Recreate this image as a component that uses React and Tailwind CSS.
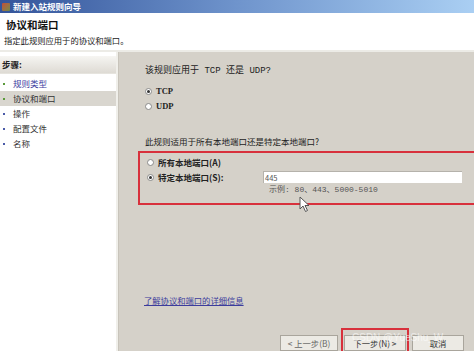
import React from "react";

const cjk = { fontFamily: '"Noto Sans CJK SC", "Liberation Sans", sans-serif' };
const mono = { fontFamily: '"Liberation Mono", "Noto Sans CJK SC", monospace' };
const serif = { fontFamily: '"Liberation Serif", "Noto Sans CJK SC", serif' };

function Radio({ checked }) {
  return (
    <span className="relative inline-flex w-[7px] h-[7px] rounded-full bg-white border border-[#8a8a8a] mr-[4px] items-center justify-center">
      {checked && <span className="w-[3px] h-[3px] rounded-full bg-[#333]" />}
    </span>
  );
}

function Step({ label, active, done }) {
  return (
    <div className={`flex items-center h-[15px] pl-[3px] ${active ? "bg-[#d9d6cf]" : ""}`}>
      <span className={`w-[2px] h-[2px] mr-[8px] ${done ? "bg-[#5a9a3a]" : "bg-[#4a5aa8]"}`} />
      <span className={`text-[8.5px] leading-none ${label === "规则类型" ? "text-[#3b3b9e]" : "text-[#333]"}`}>{label}</span>
    </div>
  );
}

export default function App() {
  return (
    <div className="w-[474px] h-[351px] overflow-hidden flex flex-col bg-[#d5d1c9] relative" style={cjk}>
      {/* title bar */}
      <div className="h-[13px] flex items-center bg-gradient-to-r from-[#34549a] via-[#6f94cc] to-[#aacff3]">
        <span className="w-[8px] h-[8px] ml-[2px] mr-[3px] bg-gradient-to-br from-[#c04a3a] to-[#6a8a4a] rounded-[1px]" />
        <span className="text-white font-bold text-[8.5px] leading-none">新建入站规则向导</span>
      </div>

      {/* header */}
      <div className="h-[39px] bg-white flex flex-col pl-[6px] border-b-2 border-[#ecebe6]">
        <div className="mt-[5px] text-[10.5px] font-bold text-[#111] leading-[14px]">协议和端口</div>
        <div className="mt-[3px] text-[8.3px] text-[#222] leading-[10px] ml-[-2px]">指定此规则应用于的协议和端口。</div>
      </div>

      {/* body */}
      <div className="flex flex-1">
        <div className="w-[116px] bg-white flex flex-col pt-[4px]">
          <div className="h-[18px] flex items-center pl-[2px] bg-gradient-to-b from-[#f6f5f2] to-[#dedbd4] border-b border-[#e6e4de]">
            <span className="text-[8.5px] font-bold text-[#222]">步骤:</span>
          </div>
          <div className="pt-[2px]">
            <Step label="规则类型" done />
            <Step label="协议和端口" active done />
            <Step label="操作" />
            <Step label="配置文件" />
            <Step label="名称" />
          </div>
        </div>
        <div className="w-[3px] bg-[#f0efea] border-r border-[#c8c4bb]" />

        <div className="flex-1 flex flex-col text-[#222]">
          <div className="pl-[26px] pt-[14px] text-[9px] leading-[10px]" style={mono}>该规则应用于 TCP 还是 UDP?</div>
          <div className="pl-[26px] mt-[10px] flex items-center h-[10px] text-[8.5px] font-bold" style={serif}>
            <Radio checked />TCP
          </div>
          <div className="pl-[26px] mt-[5px] flex items-center h-[10px] text-[8.5px] font-bold" style={serif}>
            <Radio />UDP
          </div>
          <div className="pl-[26px] mt-[25px] text-[8.5px] leading-[10px]">此规则适用于所有本地端口还是特定本地端口?</div>

          <div className="ml-[19px] mt-[5px] h-[54px] border-2 border-r-0 border-[#d8313c] pl-[7px] pt-[3px]">
            <div className="flex items-center h-[12px] text-[8.5px] font-bold text-[#222]">
              <Radio />所有本地端口(A)
            </div>
            <div className="flex items-center h-[14px] mt-[2px] text-[8.5px] font-bold text-[#222]">
              <span className="flex items-center w-[116px]"><Radio checked />特定本地端口(S):</span>
              <div className="w-[199px] h-[12px] bg-white border-t border-[#8e8b84] border-l border-[#b5b2ab] flex items-center pl-[1px] text-[7.5px] font-normal text-[#555]">445</div>
            </div>
            <div className="pl-[122px] mt-[1px] text-[8px] text-[#555] leading-[10px]" style={mono}>示例: 80、443、5000-5010</div>
          </div>

          <div className="mt-auto pl-[25px] mb-[23px] text-[8.3px] text-[#3c3c9c] underline leading-[10px]">了解协议和端口的详细信息</div>

          <div className="flex items-end h-[23px] pl-[161px] gap-[3px]">
            <div className="w-[58px] h-[16px] bg-[#eceae4] border border-[#a9a59c] flex items-center justify-center text-[8.3px] text-[#666]">&lt; 上一步(B)</div>
            <div className="w-[68px] h-[23px] border-2 border-b-0 border-[#d8313c] flex items-end px-[1px]">
              <div className="w-full h-[16px] bg-[#eceae4] border border-[#a9a59c] flex items-center justify-center text-[8.3px] text-[#333]">下一步(N) &gt;</div>
            </div>
            <div className="w-[52px] h-[16px] bg-[#eceae4] border border-[#a9a59c] flex items-center justify-center text-[8.3px] text-[#333]">取消</div>
          </div>
        </div>
      </div>

      {/* cursor */}
      <svg className="absolute left-[299px] top-[196px]" width="11" height="17" viewBox="0 0 11 17">
        <path d="M1 1 L1 13 L4 10 L6.5 15.5 L8.5 14.5 L6 9.5 L10 9.5 Z" fill="#fff" stroke="#555" strokeWidth="1" strokeLinejoin="round" />
      </svg>

      {/* watermark */}
      <div className="absolute left-[352px] top-[333px] text-[10px] text-white/60 leading-none" style={{ fontFamily: '"Liberation Sans", sans-serif' }}>CSDN @YueShu_W</div>
    </div>
  );
}
